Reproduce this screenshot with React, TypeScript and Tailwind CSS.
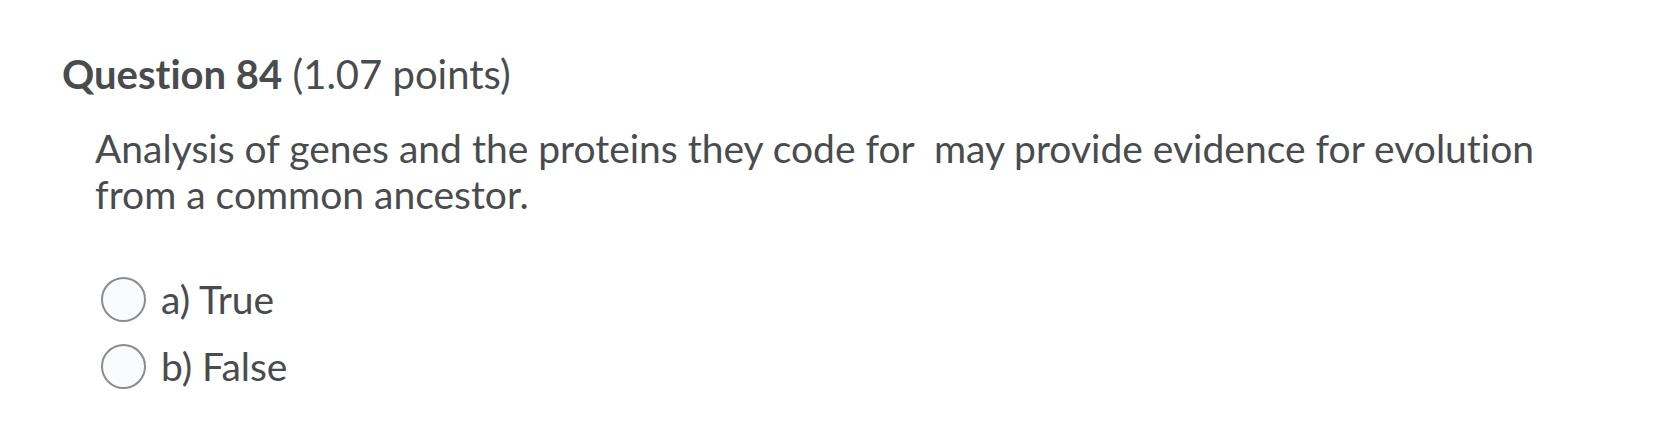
export default function App() {
  const options = ["a) True", "b) False"];
  return (
    <div className="w-[1656px] h-[426px] bg-white text-[#494c4e] font-['Lato',sans-serif] [font-variant-ligatures:no-common-ligatures]">
      <div className="pt-[48px] pl-[62px]">
        <h2 className="text-[40px] leading-[52px]">
          <span className="font-bold">Question 84</span> (1.07 points)
        </h2>
        <div className="pl-[33px] pt-[25px]">
          <p className="text-[39px] leading-[46px] w-[1460px]">
            Analysis of genes and the proteins they code for{"\u00a0"} may provide evidence for evolution from a common ancestor.
          </p>
          <div className="mt-[60px] pl-[6px] flex flex-col gap-[22px]">
            {options.map((o) => (
              <label key={o} className="flex items-center gap-[15px] text-[39px] leading-[45px]">
                <span className="w-[45px] h-[45px] rounded-full border-2 border-[#8a8c8f] bg-[#f9fbff] shrink-0" />
                <span>{o}</span>
              </label>
            ))}
          </div>
        </div>
      </div>
    </div>
  );
}
